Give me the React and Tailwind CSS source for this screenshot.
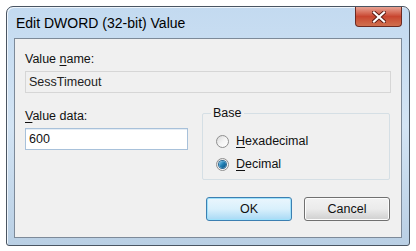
import React from 'react'

function Radio({ checked }) {
  return (
    <span
      className="relative flex h-[13px] w-[13px] items-center justify-center rounded-full border border-[#8f8f8f] bg-gradient-to-br from-[#d9d9d9] via-[#f4f4f4] to-white"
    >
      {checked && (
        <span className="h-[7px] w-[7px] rounded-full bg-gradient-to-br from-[#7fd0f4] via-[#1f7fb4] to-[#0d4f7e] shadow-[0_0_0_1px_#2b6a96]" />
      )}
    </span>
  )
}

export default function App() {
  return (
    <div
      className="h-[251px] w-[416px] bg-white pl-[6px] pt-[6px] text-[12.5px] text-[#111]"
      style={{ fontFamily: '"Liberation Sans", Arial, sans-serif' }}
    >
      <div className="flex h-[240px] w-[404px] flex-col rounded-t-[7px] rounded-b-[3px] border border-[#4a5562] bg-gradient-to-b from-[#c3daf0] via-[#d3e4f4] to-[#b9cfe4] shadow-[inset_1px_1px_0_#eef5fc]">
        {/* title bar */}
        <div className="flex h-[31px] items-start">
          <div className="ml-[9px] mt-[6px] text-[14px] text-black">Edit DWORD (32-bit) Value</div>
          <div className="ml-auto mr-[7px] flex h-[20px] w-[47px] items-center justify-center rounded-b-[4px] border border-t-0 border-[#6b2a22] bg-gradient-to-b from-[#e8a293] via-[#c8452f] to-[#d0704f]">
            <svg width="14" height="12" viewBox="0 0 14 12">
              <path d="M2 1.5 L12 10.5 M12 1.5 L2 10.5" stroke="#5a1a12" strokeWidth="4" strokeLinecap="square" />
              <path d="M2 1.5 L12 10.5 M12 1.5 L2 10.5" stroke="#ffffff" strokeWidth="2.2" strokeLinecap="square" />
            </svg>
          </div>
        </div>

        {/* client area */}
        <div className="mx-[7px] mb-[7px] flex flex-1 flex-col border border-[#7d8a99] bg-[#f0f0f0] pl-[10px] pr-[10px] pt-[12px]">
          <div className="h-[16px] leading-[16px]">
            Value <span className="underline underline-offset-2">n</span>ame:
          </div>
          <div className="mt-[4px] flex h-[22px] w-[366px] items-center border border-[#d6d6d6] bg-[#f0f0f0] pl-[3px] text-[#222]">
            SessTimeout
          </div>

          <div className="mt-[10px] flex">
            <div className="flex flex-col">
              <div className="mt-[5px] h-[16px] leading-[16px]">
                <span className="underline underline-offset-2">V</span>alue data:
              </div>
              <div className="mt-[4px] flex h-[22px] w-[163px] items-center border border-[#a8c1da] bg-white pl-[3px] shadow-[inset_0_1px_0_#e5edf5]">
                600
              </div>
            </div>

            <div className="relative ml-[14px] mt-[10px] h-[67px] w-[188px] rounded-[2px] border border-[#d5dfe5]">
              <div className="absolute left-[8px] top-[-9px] bg-[#f0f0f0] px-[2px] leading-[16px]">Base</div>
              <div className="ml-[13px] mt-[18px] flex items-center gap-[7px]">
                <Radio />
                <span>
                  <span className="underline underline-offset-2">H</span>exadecimal
                </span>
              </div>
              <div className="ml-[13px] mt-[4px] flex items-center gap-[7px]">
                <Radio checked />
                <span>
                  <span className="underline underline-offset-2">D</span>ecimal
                </span>
              </div>
            </div>
          </div>

          <div className="mt-[17px] flex justify-end gap-[12px] pr-[1px]">
            <button className="flex h-[24px] w-[86px] items-center justify-center rounded-[3px] border border-[#3c7fb1] bg-gradient-to-b from-[#eaf6fd] via-[#d9f0fc] to-[#a7d9f5] shadow-[inset_0_0_0_1px_#9ee1fb]">
              OK
            </button>
            <button className="flex h-[24px] w-[86px] items-center justify-center rounded-[3px] border border-[#707070] bg-gradient-to-b from-[#f2f2f2] via-[#ebebeb] to-[#cfcfcf] shadow-[inset_0_0_0_1px_#fcfcfc]">
              Cancel
            </button>
          </div>
        </div>
      </div>
    </div>
  )
}
